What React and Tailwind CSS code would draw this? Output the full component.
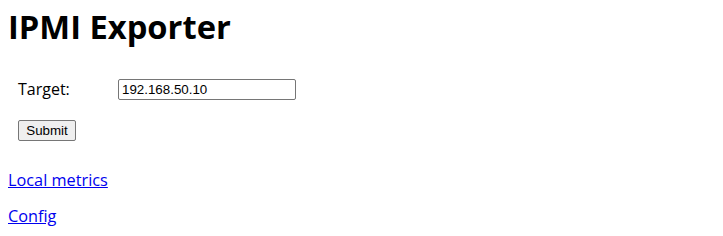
export default function App() {
  return (
    <div className="min-h-[236px] bg-white px-2 text-black" style={{ fontFamily: '"Open Sans", "Noto Sans", sans-serif' }}>
      <h1 className="pt-[5px] text-[32.7px] font-bold leading-[44px]">IPMI Exporter</h1>

      <form className="mt-[25px] flex flex-col pl-[10px]" onSubmit={e => e.preventDefault()}>
        <div className="flex h-[30px] items-center">
          <label className="w-[100px] text-[16px] leading-[22px]">Target:</label>
          <input
            type="text"
            defaultValue="192.168.50.10"
            className="h-[21px] w-[178px] rounded-[2px] border border-[#767676] px-[3px] text-[13.33px] text-black outline-none"
            style={{ fontFamily: '"Liberation Sans", Arial, sans-serif' }}
          />
        </div>
        <div className="mt-[16px] flex">
          <button
            type="submit"
            className="h-[21px] w-[58px] rounded-[2px] border border-[#767676] bg-[#efefef] text-[13.33px] leading-[19px] text-black"
            style={{ fontFamily: '"Liberation Sans", Arial, sans-serif' }}
          >
            Submit
          </button>
        </div>
      </form>

      <div className="mt-[28px] flex flex-col items-start gap-[14px] text-[16.3px] leading-[22px]">
        <a href="#" className="text-[#0000ee] underline">Local metrics</a>
        <a href="#" className="text-[#0000ee] underline">Config</a>
      </div>
    </div>
  );
}
